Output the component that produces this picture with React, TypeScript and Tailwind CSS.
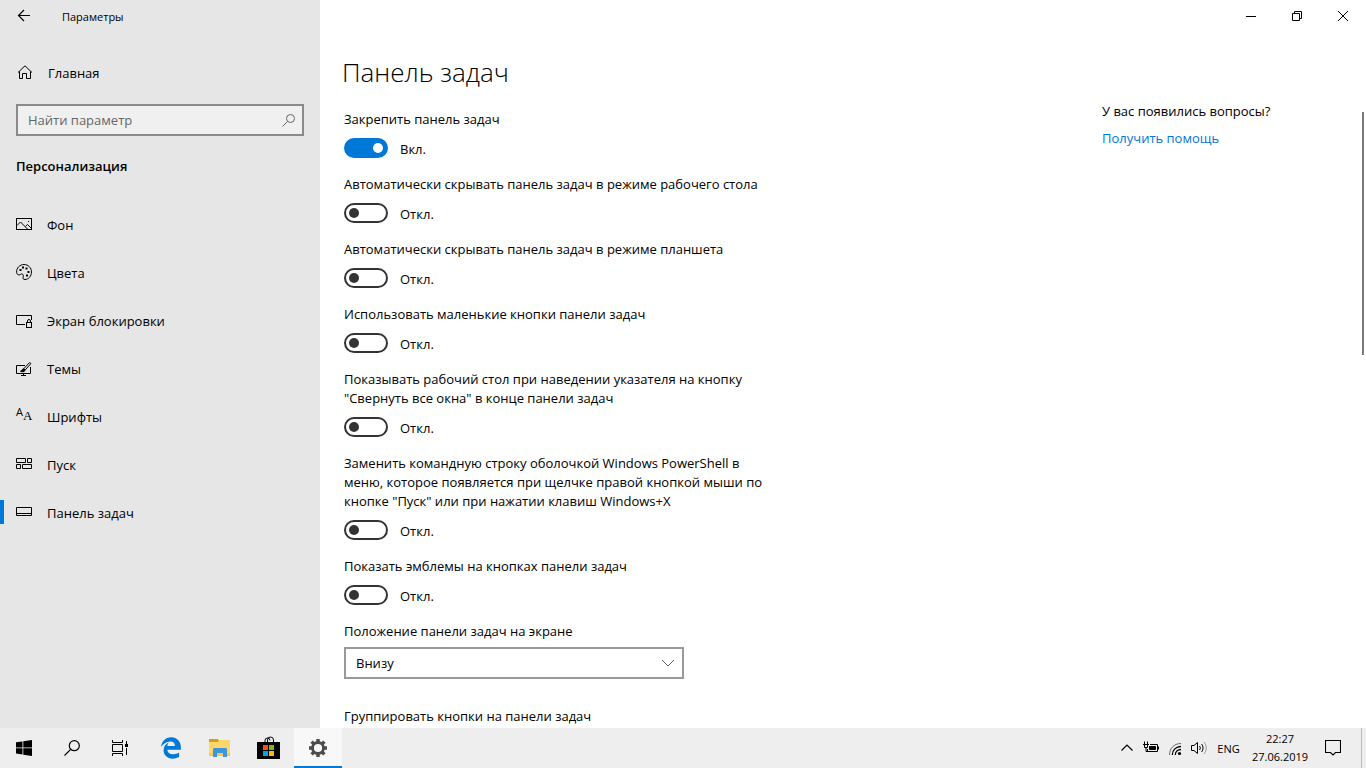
import React, { useState } from 'react';
import { FaEdgeLegacy } from 'react-icons/fa';

interface IconProps {
  children: React.ReactNode;
  size?: number;
  className?: string;
}

function Icon({ children, size = 16, className = '' }: IconProps) {
  return (
    <svg
      width={size}
      height={size}
      viewBox={`0 0 ${size} ${size}`}
      fill="none"
      stroke="currentColor"
      className={`shrink-0 ${className}`}
      aria-hidden="true"
    >
      {children}
    </svg>
  );
}

const navItems = [
  {
    label: 'Фон',
    icon: (
      <Icon>
        <rect x="0.5" y="2.5" width="15" height="11" />
        <path d="M1 9.500 4.500 6l7 7M9.500 10.500l2-2L15 12" />
        <path d="M12 5.500h1" />
      </Icon>
    ),
  },
  {
    label: 'Цвета',
    icon: (
      <Icon>
        <path d="M.6 8.200C.4 4 3.800.5 8 .5s7.500 3.300 7.500 7.500-3.100 7.500-6.500 7.500c-1.800 0-2.300-1-1.900-2.300.5-1.500.3-2.800-.9-3.200-1.200-.4-1.700.9-3.100.9C1.600 10.900.7 9.800.6 8.200Z" />
        <path d="M3.500 6h2M6 3.500h2M9.500 4.500h2M11.500 8h2M10 11.500h2" strokeWidth="2" />
      </Icon>
    ),
  },
  {
    label: 'Экран блокировки',
    icon: (
      <Icon>
        <path d="M9 12.500H.5v-9h15V8" />
        <rect x="10.5" y="10.5" width="5" height="5" />
        <path d="M11.500 10.500V9a1.500 1.500 0 0 1 3 0v1.500" />
      </Icon>
    ),
  },
  {
    label: 'Темы',
    icon: (
      <Icon>
        <path d="M9 5.500H.5v8h14V7M7.500 14v2M5 15.500h5" />
        <path d="M7.500 9 13.200 2.900c.8-.8 2 .3 1.300 1.200L9 10.200Z" />
        <path d="M7.500 9c-1.300 0-1.700 2-3 2.200 1.200 1 4.300.9 4.500-1Z" fill="currentColor" />
      </Icon>
    ),
  },
  {
    label: 'Шрифты',
    icon: (
      <span className="flex h-4 w-4 shrink-0 leading-4" aria-hidden="true">
        <span className="-mt-1 text-[11px]">A</span>
        <span className="font-['Liberation_Serif',serif] text-[13px]">A</span>
      </span>
    ),
  },
  {
    label: 'Пуск',
    icon: (
      <Icon>
        <path d="M.5 2.500h9v4h-9zM11.500 2.500h4v4h-4zM.5 8.500h4v4h-4zM6.500 8.500h9v4h-9z" />
      </Icon>
    ),
  },
  {
    label: 'Панель задач',
    icon: (
      <Icon>
        <path d="M.5 3.500h15v8H.5zM.5 9.500h15" />
      </Icon>
    ),
  },
];

const toggles = [
  { label: 'Закрепить панель задач', on: true },
  { label: 'Автоматически скрывать панель задач в режиме рабочего стола', on: false },
  { label: 'Автоматически скрывать панель задач в режиме планшета', on: false },
  { label: 'Использовать маленькие кнопки панели задач', on: false },
  { label: 'Показывать рабочий стол при наведении указателя на кнопку "Свернуть все окна" в конце панели задач', on: false },
  { label: 'Заменить командную строку оболочкой Windows PowerShell в меню, которое появляется при щелчке правой кнопкой мыши по кнопке "Пуск" или при нажатии клавиш Windows+X', on: false },
  { label: 'Показать эмблемы на кнопках панели задач', on: false },
];

function Toggle({ id, label, initial }: { id: string; label: string; initial: boolean }) {
  const [on, setOn] = useState(initial);

  return (
    <div className="mb-[17px]">
      <label htmlFor={id} className="block">{label}</label>
      <div className="mt-[9px] flex h-5 items-center gap-3">
        <input
          id={id}
          type="checkbox"
          role="switch"
          checked={on}
          onChange={() => setOn(!on)}
          className="h-5 w-11 shrink-0 appearance-none rounded-full border-2 border-[#333] before:mt-[3px] before:ml-[3px] before:block before:size-[10px] before:rounded-full before:bg-[#333] checked:border-[#0078d7] checked:bg-[#0078d7] checked:before:ml-[27px] checked:before:bg-white"
        />
        <span className="pt-[2px]">{on ? 'Вкл.' : 'Откл.'}</span>
      </div>
    </div>
  );
}

function Sidebar() {
  return (
    <aside className="flex w-80 shrink-0 flex-col bg-[#e6e6e6]">
      <div className="flex h-8 items-center">
        <button aria-label="Назад" className="flex h-8 w-12 items-center justify-center">
          <Icon>
            <path d="M14 7.500H2.500M8 2 2.500 7.500 8 13" strokeWidth="1.200" />
          </Icon>
        </button>
        <span className="ml-[14px] pt-px text-[11px]">Параметры</span>
      </div>

      <a href="#home" className="mt-4 flex h-12 items-center gap-4 px-4">
        <Icon>
          <path d="M2 8.500 9 1.800l7 6.700M3.500 7.500v7h3v-5h4v5h4v-7" />
        </Icon>
        <span className="pt-[2px]">Главная</span>
      </a>

      <div className="relative mx-4 mt-2">
        <input
          type="text"
          aria-label="Найти параметр"
          placeholder="Найти параметр"
          className="h-8 w-full border-2 border-[#8a8a8a] bg-[#f0f0f0] pr-8 pb-px pl-[10px] placeholder:text-[#666]"
        />
        <Icon className="absolute top-2 right-2 text-[#666]">
          <circle cx="10.5" cy="6.5" r="4" />
          <path d="m7.500 9.500-5 5" />
        </Icon>
      </div>

      <h2 className="mt-5 px-4 leading-5 font-semibold">Персонализация</h2>

      <nav className="mt-6">
        {navItems.map((item) => (
          <a
            key={item.label}
            href="#section"
            className="relative flex h-12 items-center gap-[15px] px-4"
          >
            {item.label === 'Панель задач' && (
              <span className="absolute top-3 left-0 h-6 w-1 bg-[#0078d7]" />
            )}
            {item.icon}
            <span className="pt-[2px]">{item.label}</span>
          </a>
        ))}
      </nav>
    </aside>
  );
}

function WindowControls() {
  return (
    <div className="flex h-8 shrink-0 justify-end">
      <button aria-label="Свернуть" className="flex w-[46px] items-center justify-center">
        <Icon size={10}>
          <path d="M0 5.500h10" />
        </Icon>
      </button>
      <button aria-label="Свернуть в окно" className="flex w-[46px] items-center justify-center">
        <Icon size={10}>
          <path d="M.5 2.500h7v7h-7zM2.500 2.500v-2h7v7h-2" />
        </Icon>
      </button>
      <button aria-label="Закрыть" className="flex w-[46px] items-center justify-center">
        <Icon size={10}>
          <path d="m0 0 10 10M10 0 0 10" />
        </Icon>
      </button>
    </div>
  );
}

function Settings() {
  return (
    <main className="relative flex min-w-0 flex-1 flex-col overflow-hidden bg-white">
      <WindowControls />
      <div className="flex">
        <div className="min-w-0 flex-1">
          <h1 className="mt-[22px] px-[22px] text-[26px] leading-9 font-light">Панель задач</h1>
          <div className="mt-5 max-w-[480px] px-6">
            {toggles.map((toggle, index) => (
              <Toggle key={toggle.label} id={`toggle-${index}`} label={toggle.label} initial={toggle.on} />
            ))}
            <label htmlFor="position" className="block">Положение панели задач на экране</label>
            <div className="relative mt-[6px] w-[340px]">
              <select
                id="position"
                defaultValue="bottom"
                className="h-8 w-full appearance-none border-2 border-[#999] bg-white pl-[10px]"
              >
                <option value="left">Слева</option>
                <option value="top">Сверху</option>
                <option value="right">Справа</option>
                <option value="bottom">Внизу</option>
              </select>
              <Icon className="pointer-events-none absolute top-2 right-2 text-[#666]">
                <path d="m2 5 6 6 6-6" />
              </Icon>
            </div>
            <p className="mt-7">Группировать кнопки на панели задач</p>
          </div>
        </div>
        <div className="w-[264px] shrink-0 pt-[70px]">
          <p>У вас появились вопросы?</p>
          <a href="#help" className="mt-2 block text-[#0078d7]">Получить помощь</a>
        </div>
      </div>
      {/* Scroll thumb */}
      <div className="absolute top-28 right-[2px] h-[243px] w-[2px] bg-[#7a7a7a]" />
    </main>
  );
}

function Taskbar() {
  return (
    <footer className="flex h-10 shrink-0 bg-[#eee] text-[11px]">
      <button aria-label="Пуск" className="flex w-12 items-center justify-center">
        <Icon>
          <path
            d="M0 2.300 6.500 1.400V7.500H0zM7.300 1.300 16 0v7.500H7.300zM0 8.300h6.500v6.200L0 13.600zM7.300 8.300H16V16l-8.700-1.300z"
            fill="currentColor"
            stroke="none"
          />
        </Icon>
      </button>
      <button aria-label="Поиск" className="flex w-12 items-center justify-center">
        <Icon>
          <circle cx="10.3" cy="5.7" r="5" strokeWidth="1.200" />
          <path d="M6.700 9.300.5 15.500" strokeWidth="1.200" />
        </Icon>
      </button>
      <button aria-label="Представление задач" className="flex w-12 items-center justify-center">
        <Icon>
          <path d="M.5 0v2.500h10V0M.5 16v-2.500h10V16M.5 4.500h10v7H.5zM14.500 1v3M14.500 8v7" />
          <path d="M13 4h3v3h-3z" fill="currentColor" stroke="none" />
        </Icon>
      </button>

      <div className="ml-[3px] flex gap-px">
        <button aria-label="Microsoft Edge" className="flex w-12 items-center justify-center">
          <FaEdgeLegacy size={22} className="text-[#0078d7]" />
        </button>
        <button aria-label="Проводник" className="flex w-12 items-center justify-center">
          <Icon size={22}>
            <g stroke="none">
              <path d="M0 2h9l1 2v3H0z" fill="#dc9c0b" />
              <path d="M0 5h9l1.500-2H21v15H0z" fill="#ffd66b" />
              <path d="M0 16h21v3H0z" fill="#f8c855" />
              <path d="M4 20v-8l1-1h12l1 1v8h-4v-4H8v4z" fill="#3a96dd" />
            </g>
          </Icon>
        </button>
        <button aria-label="Microsoft Store" className="flex w-12 items-center justify-center">
          <Icon size={24}>
            <path d="M8 6.500V4.500a2.500 2.500 0 0 1 5 0M10.500 6.500V4a3 3 0 0 1 6 0v2.500" />
            <g stroke="none">
              <path d="M0 6h23v17H0z" fill="#000" />
              <path d="M6 9h5v5H6z" fill="#f25022" />
              <path d="M12 9h5v5h-5z" fill="#7fba00" />
              <path d="M6 15h5v5H6z" fill="#00a4ef" />
              <path d="M12 15h5v5h-5z" fill="#ffb900" />
            </g>
          </Icon>
        </button>
        <button
          aria-label="Параметры"
          className="flex w-12 items-center justify-center border-b-2 border-[#0078d7] bg-[#f8f8f8] pt-[2px] text-[#4c4c4c]"
        >
          <Icon size={18}>
            <circle cx="9" cy="9" r="5.5" strokeWidth="2.800" />
            <path
              d="M9 0v3.500M9 14.500V18M0 9h3.500M14.500 9H18M2.600 2.600l2.500 2.500M12.900 12.900l2.500 2.500M15.400 2.600l-2.500 2.500M5.100 12.900l-2.500 2.500"
              strokeWidth="3.400"
            />
          </Icon>
        </button>
      </div>

      <div className="ml-auto flex">
        <button aria-label="Отображать скрытые значки" className="flex w-6 items-center justify-center">
          <Icon>
            <path d="m2.500 10.500 5.500-5.500 5.500 5.500" strokeWidth="1.200" />
          </Icon>
        </button>
        <button aria-label="Батарея" className="flex w-6 items-center justify-center">
          <Icon>
            <path d="M7 4.500h7.500v7H4.500V9M15.500 6.500v3" />
            <path d="M6.500 6.500h6v3h-6z" fill="currentColor" />
            <path d="M1.500 1.500v3M4.500 1.500v3M0 4.500h6M1.500 5v2.500h3V5M3 7v4.500h2" />
          </Icon>
        </button>
        <button aria-label="Сеть" className="flex w-6 items-center justify-center">
          <Icon>
            <path d="M2.500 15C2.500 8.500 7 3.500 14 3.500" stroke="#666" />
            <path d="M5.300 15c0-5 3.700-8.500 8.700-8.500M8.300 15c0-3.300 2.400-5.500 5.700-5.500" strokeWidth="1.300" />
            <circle cx="12.5" cy="13.5" r="1.600" fill="currentColor" stroke="none" />
          </Icon>
        </button>
        <button aria-label="Громкость" className="flex w-6 items-center justify-center">
          <Icon>
            <path d="M.5 5.500h2.500L6.500 2.500v11L3 10.500H.5z" />
            <path d="M8.500 6c1 1.200 1 2.800 0 4M10.500 4c2 2.300 2 5.700 0 8" />
            <path d="M13 2c3 3.500 3 8.500 0 12" stroke="#999" />
          </Icon>
        </button>
        <button className="w-[35px]">ENG</button>
        <button className="ml-[5px] flex w-[58px] flex-col items-center justify-center leading-[18px]">
          <span>22:27</span>
          <span>27.06.2019</span>
        </button>
        <button aria-label="Центр уведомлений" className="flex w-12 items-center justify-center">
          <Icon>
            <path d="M.5.5h15v12h-5L8 15l-2.500-2.500h-5z" strokeWidth="1.100" />
          </Icon>
        </button>
        <button aria-label="Свернуть все окна" className="ml-1 w-[5px] border-l border-[#bbb]" />
      </div>
    </footer>
  );
}

export default function App() {
  return (
    <div className="flex h-screen flex-col overflow-hidden font-['Open_Sans',sans-serif] text-[13px] leading-[19px] text-black">
      <div className="flex min-h-0 flex-1">
        <Sidebar />
        <Settings />
      </div>
      <Taskbar />
    </div>
  );
}
